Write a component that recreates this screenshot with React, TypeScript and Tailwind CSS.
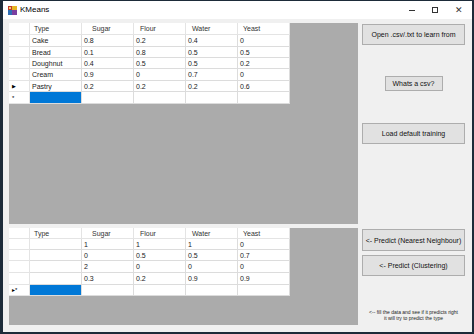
import React from "react";

const cellBase =
  "bg-white border-r border-b border-[#dcdcdc] flex items-center text-[7px] leading-none text-[#1a1a1a] overflow-hidden whitespace-nowrap";

function Grid({
  rowsClass,
  rows,
  markerRow,
  newMarker,
}: {
  rowsClass: string;
  rows: string[][];
  markerRow: number;
  newMarker: string;
}) {
  const headers = ["Type", "Sugar", "Flour", "Water", "Yeast"];
  const hpad = ["pl-[4px]", "pl-[10px]", "pl-[6px]", "pl-[6px]", "pl-[5px]"];
  return (
    <div className={`grid grid-cols-[21px_52px_52px_52px_52px_52px] ${rowsClass} w-[281px]`}>
      <div className="bg-white border-r border-b border-[#e4e4e4]" />
      {headers.map((h, i) => (
        <div
          key={h}
          className={`bg-white border-r border-b border-[#e4e4e4] flex items-center text-[7px] leading-none text-[#333] ${hpad[i]}`}
        >
          {h}
        </div>
      ))}
      {rows.map((r, ri) => (
        <React.Fragment key={ri}>
          <div className="bg-white border-r border-b border-[#e4e4e4] flex items-center pl-[3px] text-[5px] leading-none text-black">
            {ri === markerRow ? "▶" : ""}
          </div>
          {r.map((c, ci) => (
            <div key={ci} className={`${cellBase} pl-[2px]`}>
              {c}
            </div>
          ))}
        </React.Fragment>
      ))}
      <div className="bg-white border-r border-b border-[#e4e4e4] flex items-center pl-[3px] text-[6px] leading-none text-black">
        {newMarker}
      </div>
      <div className="bg-[#0078d7] border-r border-b border-[#dcdcdc]" />
      {[0, 1, 2, 3].map((i) => (
        <div key={i} className={cellBase} />
      ))}
    </div>
  );
}

function Btn({ children, cls }: { children: React.ReactNode; cls: string }) {
  return (
    <div
      className={`bg-[#e1e1e1] border border-[#adadad] flex items-center justify-center text-[7px] leading-none text-[#111] whitespace-nowrap ${cls}`}
    >
      {children}
    </div>
  );
}

export default function App() {
  const top = [
    ["Cake", "0.8", "0.2", "0.4", "0"],
    ["Bread", "0.1", "0.8", "0.5", "0.5"],
    ["Doughnut", "0.4", "0.5", "0.5", "0.2"],
    ["Cream", "0.9", "0", "0.7", "0"],
    ["Pastry", "0.2", "0.2", "0.2", "0.6"],
  ];
  const bottom = [
    ["", "1", "1", "1", "0"],
    ["", "0", "0.5", "0.5", "0.7"],
    ["", "2", "0", "0", "0"],
    ["", "0.3", "0.2", "0.9", "0.9"],
  ];
  return (
    <div className="w-[474px] h-[334px] bg-[#1d2b39] pt-[1px] pl-[3px] pr-[2px] pb-[2px] flex font-['Liberation_Sans',Arial,sans-serif]">
      <div className="flex-1 flex flex-col bg-[#f0f0f0]">
        {/* title bar */}
        <div className="h-[18px] bg-white flex items-center shrink-0">
          <svg width="9" height="9" viewBox="0 0 9 9" className="ml-[5px]">
            <rect x="0" y="0" width="4" height="4" fill="#c0392b" />
            <rect x="4" y="0" width="5" height="4" fill="#e6b422" />
            <rect x="0" y="4" width="4" height="5" fill="#2f6fb5" />
            <rect x="4" y="4" width="5" height="5" fill="#7a3fa0" />
            <rect x="1" y="1" width="2" height="2" fill="#f2d16b" />
          </svg>
          <span className="ml-[3px] text-[8px] leading-none text-black">KMeans</span>
          <div className="flex-1" />
          <div className="w-[22px] flex justify-center">
            <div className="w-[6px] h-px bg-[#333]" />
          </div>
          <div className="w-[24px] flex justify-center">
            <div className="w-[6px] h-[6px] border border-[#333]" />
          </div>
          <div className="w-[24px] flex justify-center text-[9px] leading-none text-[#333] mr-[1px]">
            ✕
          </div>
        </div>
        {/* content */}
        <div className="flex-1 flex">
          <div className="w-[355px] pl-[6px] pt-[4px] pb-[7px] flex flex-col gap-[4px]">
            <div className="h-[201px] bg-[#ababab]">
              <Grid
                rowsClass="grid-rows-[12px_12px_11px_11px_12px_11px_12px]"
                rows={top}
                markerRow={4}
                newMarker="*"
              />
            </div>
            <div className="flex-1 bg-[#ababab]">
              <Grid
                rowsClass="grid-rows-[11px_11px_11px_12px_12px_11px]"
                rows={bottom}
                markerRow={-1}
                newMarker="▸*"
              />
            </div>
          </div>
          <div className="flex-1 flex flex-col pl-[4px] pt-[5px]">
            <Btn cls="w-[103px] h-[21px]">Open .csv/.txt to learn from</Btn>
            <div className="w-[103px] flex justify-center mt-[31px]">
              <Btn cls="w-[58px] h-[15px]">Whats a csv?</Btn>
            </div>
            <Btn cls="w-[103px] h-[21px] mt-[32px]">Load default training</Btn>
            <Btn cls="w-[103px] h-[22px] mt-[85px]">{"<- Predict (Nearest Neighbour)"}</Btn>
            <Btn cls="w-[103px] h-[21px] mt-[4px]">{"<- Predict (Clustering)"}</Btn>
            <div className="w-[103px] mt-[33px] flex flex-col items-center text-[5px] leading-[6px] text-[#222]">
              <span>{"<-- fill the data and see if it predicts right"}</span>
              <span>it will try to predict the type</span>
            </div>
          </div>
        </div>
      </div>
    </div>
  );
}
